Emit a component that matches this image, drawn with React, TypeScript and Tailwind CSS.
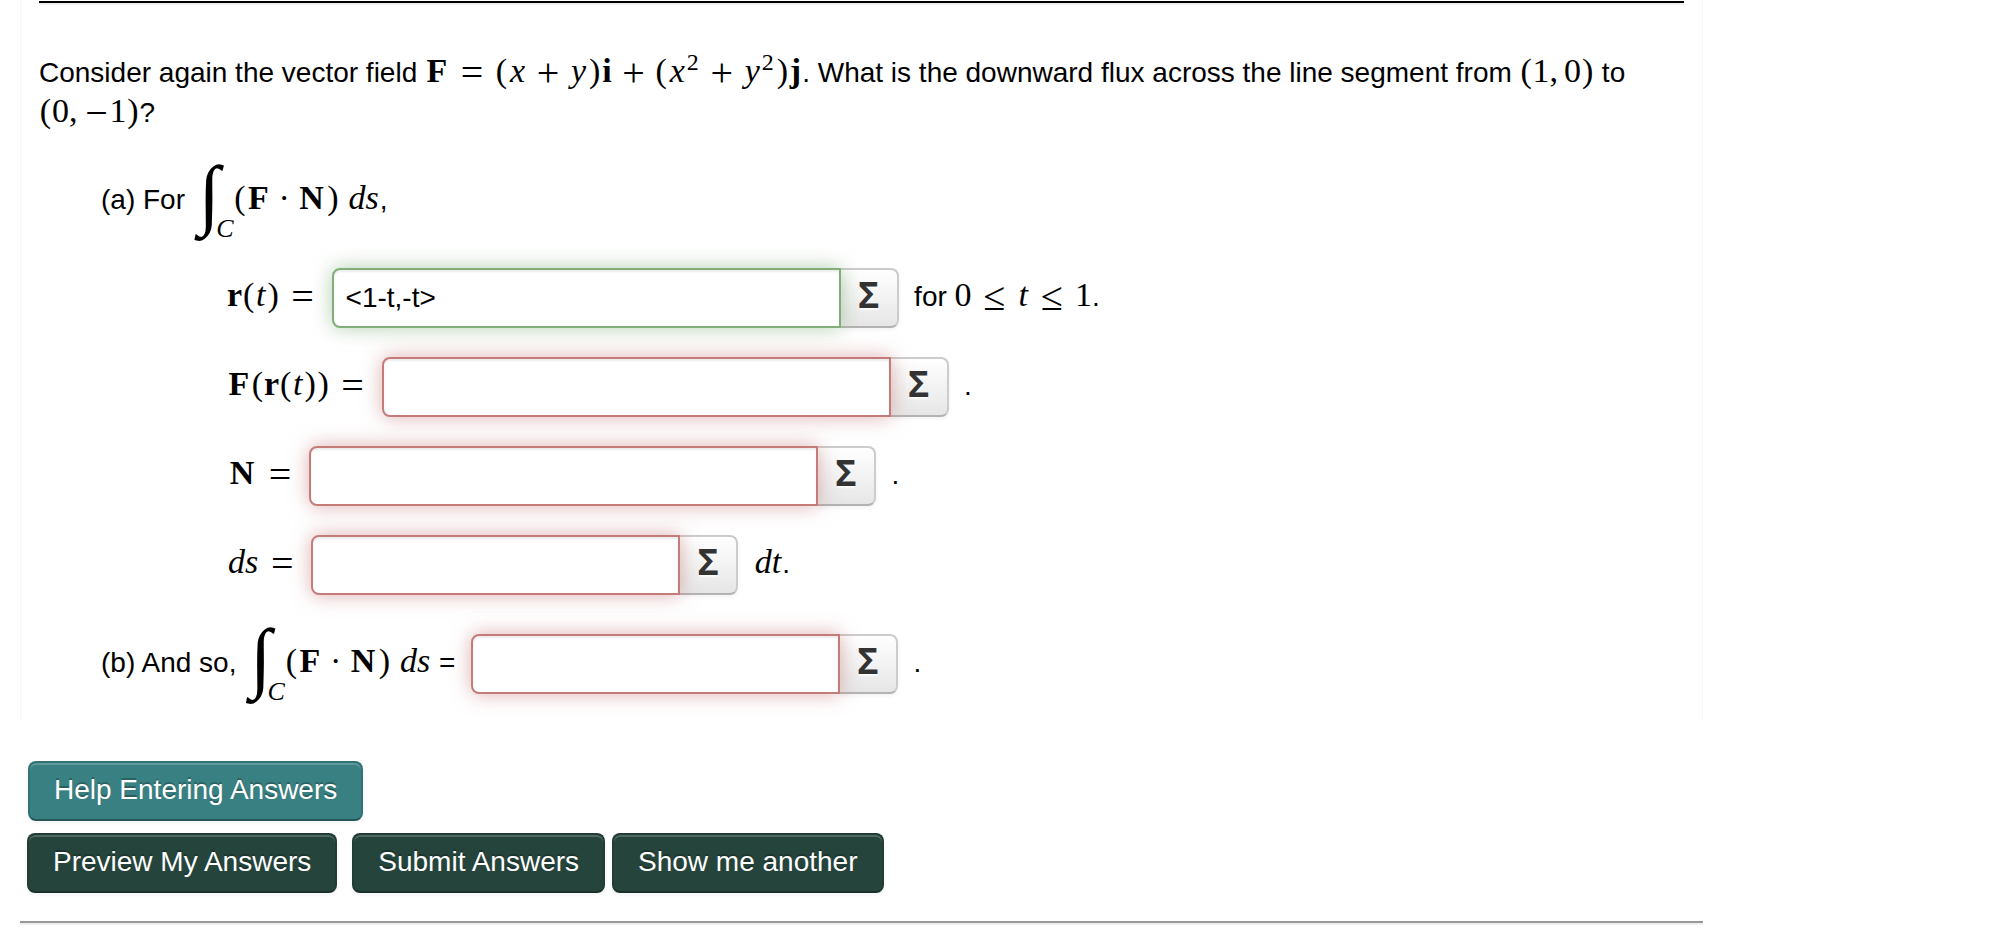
import { useState } from "react";
import type { ReactNode } from "react";

/* Math symbols, each with its own advance width. */
function Paren({ children }: { children: ReactNode }) {
  return <span className="inline-block w-[13px] text-center">{children}</span>;
}

function Bold({ children }: { children: ReactNode }) {
  return <b className="px-px font-bold">{children}</b>;
}

function F() {
  return <b className="inline-block w-6 text-center font-bold">F</b>;
}

function N() {
  return <b className="inline-block w-[30px] text-center font-bold">N</b>;
}

function Var({ children }: { children: ReactNode }) {
  return <i className="px-px">{children}</i>;
}

function Coord({ children }: { children: ReactNode }) {
  return <i className="px-0.5">{children}</i>;
}

function Op({ children }: { children: ReactNode }) {
  return (
    <span className="mx-2 inline-block w-[26px] text-center align-[-4px] text-[40px] leading-6">
      {children}
    </span>
  );
}

function Rel({ children }: { children: ReactNode }) {
  return (
    <span className="mx-2.5 inline-block w-[26px] text-center align-[-4px] text-[40px] leading-6">
      {children}
    </span>
  );
}

function Sup({ children }: { children: ReactNode }) {
  return <span className="mr-0.5 align-[12px] text-2xl leading-4">{children}</span>;
}

function Comma() {
  return <span className="mr-1.5">,</span>;
}

function Dot() {
  return <span className="mx-2 inline-block w-2.5 text-center">·</span>;
}

function M({ children }: { children: ReactNode }) {
  return (
    <span className="font-['Liberation_Serif',serif] text-[34px] leading-[34px] whitespace-nowrap">
      {children}
    </span>
  );
}

function Integral() {
  return (
    <span className="ml-1.5 flex h-20 items-start font-['Liberation_Serif',serif]">
      <span className="text-[78px] leading-[66px] italic">∫</span>
      <i className="-ml-1 self-end text-[26px] leading-6">C</i>
    </span>
  );
}

function Line({ children }: { children: ReactNode }) {
  return <div className="pb-0.5 leading-10 whitespace-pre">{children}</div>;
}

function Flux() {
  return (
    <M>
      <Paren>(</Paren>
      <F />
      <Dot />
      <N />
      <Paren>)</Paren>
      <span className="ml-2">
        <Var>ds</Var>
      </span>
    </M>
  );
}

function Answer({
  label,
  initial = "",
  correct = false,
  short = false,
}: {
  label: string;
  initial?: string;
  correct?: boolean;
  short?: boolean;
}) {
  const [value, setValue] = useState(initial);
  const tone = correct
    ? "border-[#81ad79] shadow-[inset_0_2px_2px_#00000013,0_0_20px_#81ad7999]"
    : "border-[#c67b7b] shadow-[inset_0_2px_2px_#00000013,0_0_20px_#c67b7b99]";
  return (
    <div className="flex h-15">
      <input
        type="text"
        aria-label={label}
        value={value}
        onChange={(e) => setValue(e.target.value)}
        className={`relative rounded-l-lg border-2 bg-white px-3 text-[28px] outline-none ${short ? "w-[369px]" : "w-[509px]"} ${tone}`}
      />
      <button
        type="button"
        aria-label={`Equation editor for ${label}`}
        className="w-[58px] rounded-r-lg border-2 border-l-0 border-[#ccc] border-b-[#b3b3b3] bg-linear-to-b from-white to-[#e6e6e6] pb-1.5 font-['Open_Sans',sans-serif] text-4xl leading-none font-bold text-[#333] shadow-[0_2px_4px_#0000000d] text-shadow-[0_2px_2px_#ffffffbf]"
      >
        Σ
      </button>
    </div>
  );
}

function Action({ children, teal = false }: { children: ReactNode; teal?: boolean }) {
  return (
    <button
      type="button"
      className={`h-15 rounded-lg border-2 px-6 pb-0.5 text-[28px] leading-10 text-white shadow-[inset_0_2px_0_#ffffff33,0_2px_4px_#0000000d] text-shadow-[0_-2px_0_#00000040] ${
        teal
          ? "border-[#327274] border-b-[#265658] bg-[#388082]"
          : "border-[#213d35] border-b-[#1a302a] bg-[#25443c]"
      }`}
    >
      {children}
    </button>
  );
}

function Row({ children }: { children: ReactNode }) {
  return <div className="flex items-center">{children}</div>;
}

function Lhs({ children }: { children: ReactNode }) {
  return (
    <div className="pr-1.5">
      <Line>
        <M>{children}</M>
      </Line>
    </div>
  );
}

export default function App() {
  return (
    <main className="mr-[291px] ml-5 font-['Liberation_Sans',sans-serif] text-[28px] text-black">
      <section className="border-x border-[#f7f7f7] px-[18px] pt-px pb-[17px]">
        <hr className="h-1 border-t-2 border-b-2 border-t-black border-b-[#eee]" />
        <p className="mt-12 leading-10">
          Consider again the vector field{" "}
          <M>
            <F />
            <Rel>=</Rel>
            <Paren>(</Paren>
            <Coord>x</Coord>
            <Op>+</Op>
            <Coord>y</Coord>
            <Paren>)</Paren>
            <Bold>i</Bold>
            <Op>+</Op>
            <Paren>(</Paren>
            <Coord>x</Coord>
            <Sup>2</Sup>
            <Op>+</Op>
            <Coord>y</Coord>
            <Sup>2</Sup>
            <Paren>)</Paren>
            <Bold>j</Bold>
          </M>
          . What is the downward flux across the line segment from{" "}
          <M>
            <Paren>(</Paren>1<Comma />0<Paren>)</Paren>
          </M>{" "}
          to{" "}
          <M>
            <Paren>(</Paren>0<Comma />
            <span className="-mx-2">
              <Op>−</Op>
            </span>
            1<Paren>)</Paren>
          </M>
          ?
        </p>

        <div className="mt-7 flex h-20 items-center pl-[62px]">
          <Line>(a) For </Line>
          <Integral />
          <Line>
            <Flux />,
          </Line>
        </div>

        <div className="mt-[27px] flex flex-col gap-[29px] pl-[188px]">
          <Row>
            <Lhs>
              <b>r</b>
              <Paren>(</Paren>
              <Var>t</Var>
              <Paren>)</Paren>
              <Rel>=</Rel>
            </Lhs>
            <Answer label="r(t)" initial="<1-t,-t>" correct />
            <Line>
              {"  for "}
              <M>
                0<Rel>≤</Rel>
                <Var>t</Var>
                <Rel>≤</Rel>1
              </M>
              .
            </Line>
          </Row>
          <Row>
            <Lhs>
              <F />
              <Paren>(</Paren>
              <b>r</b>
              <Paren>(</Paren>
              <Var>t</Var>
              <Paren>)</Paren>
              <Paren>)</Paren>
              <Rel>=</Rel>
            </Lhs>
            <Answer label="F(r(t))" />
            <Line>{"  ."}</Line>
          </Row>
          <Row>
            <Lhs>
              <N />
              <Rel>=</Rel>
            </Lhs>
            <Answer label="N" />
            <Line>{"  ."}</Line>
          </Row>
          <Row>
            <Lhs>
              <Var>ds</Var>
              <Rel>=</Rel>
            </Lhs>
            <Answer label="ds" short />
            <Line>
              {"  "}
              <M>
                <Var>dt</Var>
              </M>
              .
            </Line>
          </Row>
        </div>

        <div className="mt-[29px] flex h-20 items-center pl-[62px]">
          <Line>(b) And so, </Line>
          <Integral />
          <Line>
            <Flux />
            {" =  "}
          </Line>
          <Answer label="the flux integral" short />
          <Line>{"  ."}</Line>
        </div>
      </section>

      <div className="mt-10 flex px-2">
        <Action teal>Help Entering Answers</Action>
      </div>
      <div className="mt-3 flex gap-[7px] px-[7px]">
        <span className="mr-2 flex">
          <Action>Preview My Answers</Action>
        </span>
        <Action>Submit Answers</Action>
        <Action>Show me another</Action>
      </div>
      <hr className="mt-7 h-1 border-t-2 border-b-2 border-t-[#999] border-b-[#eee]" />
    </main>
  );
}
